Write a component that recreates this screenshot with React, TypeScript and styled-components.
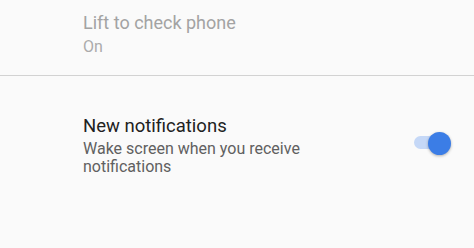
import React, { FC, useState } from 'react';
import styled, { createGlobalStyle } from 'styled-components';

const GlobalStyle = createGlobalStyle`
  html, body {
    margin: 0;
    padding: 0;
    background: #fafafa;
  }
  body {
    font-family: Roboto, 'Noto Sans', sans-serif;
    -webkit-font-smoothing: antialiased;
  }
`;

const Screen = styled.div`
  width: 474px;
  height: 248px;
  background: #fafafa;
  overflow: hidden;
`;

const Setting = styled.div<{ $divider?: boolean; $top: number }>`
  display: flex;
  align-items: flex-start;
  padding: ${p => p.$top}px 28px 0 83px;
  box-sizing: border-box;
  border-bottom: ${p => (p.$divider ? '1px solid #d2d2d2' : 'none')};
`;

const Texts = styled.div`
  flex: 1;
  display: flex;
  flex-direction: column;
`;

const Title = styled.div<{ $disabled?: boolean }>`
  font-size: ${p => (p.$disabled ? 18 : 18.5)}px;
  line-height: ${p => (p.$disabled ? 22 : 24)}px;
  color: ${p => (p.$disabled ? '#a3a3a3' : '#212121')};
`;

const Summary = styled.div<{ $disabled?: boolean }>`
  font-size: ${p => (p.$disabled ? 16 : 16)}px;
  line-height: ${p => (p.$disabled ? 20 : 18)}px;
  margin-top: ${p => (p.$disabled ? 3 : 2)}px;
  color: ${p => (p.$disabled ? '#ababab' : '#606060')};
  max-width: 230px;
`;

const SwitchTrack = styled.button<{ $on: boolean }>`
  position: relative;
  width: 32px;
  height: 13px;
  margin-top: 22px;
  padding: 0;
  border: 0;
  border-radius: 7px;
  background: ${p => (p.$on ? '#c5d8f7' : '#c8c8c8')};
  cursor: pointer;
  outline: none;
`;

const SwitchThumb = styled.span<{ $on: boolean }>`
  position: absolute;
  top: -4px;
  left: ${p => (p.$on ? '14px' : '-6px')};
  width: 23px;
  height: 23px;
  border-radius: 50%;
  background: ${p => (p.$on ? '#3b7de6' : '#f1f1f1')};
  box-shadow: 0 1px 3px rgba(0, 0, 0, 0.3);
`;

const App: FC = () => {
  const [on, setOn] = useState(true);
  return (
    <Screen>
      <GlobalStyle />
      <Setting $divider $top={12} style={{ height: 76 }}>
        <Texts>
          <Title $disabled>Lift to check phone</Title>
          <Summary $disabled>On</Summary>
        </Texts>
      </Setting>
      <Setting $top={38}>
        <Texts>
          <Title>New notifications</Title>
          <Summary>Wake screen when you receive notifications</Summary>
        </Texts>
        <SwitchTrack $on={on} onClick={() => setOn(!on)}>
          <SwitchThumb $on={on} />
        </SwitchTrack>
      </Setting>
    </Screen>
  );
};

export default App;
